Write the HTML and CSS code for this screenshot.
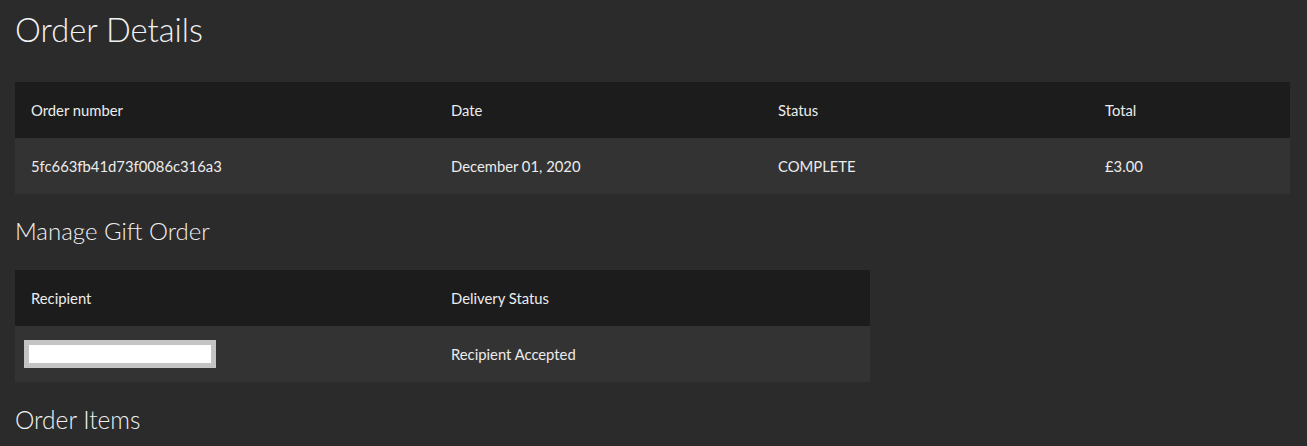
FILE: index.html
```html
<!DOCTYPE html>
<html lang="en">
<head>
<meta charset="utf-8">
<title>Order Details</title>
<link rel="stylesheet" href="styles.css">
</head>
<body>
<main class="page">
  <h1 class="title">Order Details</h1>
  <table class="tbl tbl-order">
    <thead>
      <tr>
        <th class="c1">Order number</th>
        <th class="c2">Date</th>
        <th class="c3">Status</th>
        <th class="c4">Total</th>
      </tr>
    </thead>
    <tbody>
      <tr>
        <td>5fc663fb41d73f0086c316a3</td>
        <td>December 01, 2020</td>
        <td>COMPLETE</td>
        <td class="total">£3.00</td>
      </tr>
    </tbody>
  </table>

  <h2 class="subtitle">Manage Gift Order</h2>
  <table class="tbl tbl-gift">
    <thead>
      <tr>
        <th class="g1">Recipient</th>
        <th class="g2">Delivery Status</th>
      </tr>
    </thead>
    <tbody>
      <tr>
        <td class="cell-input"><span class="redacted"></span></td>
        <td>Recipient Accepted</td>
      </tr>
    </tbody>
  </table>

  <h2 class="subtitle subtitle-items">Order Items</h2>
</main>
</body>
</html>
```

FILE: styles.css
```css
html, body {
  margin: 0;
  padding: 0;
  background: #2b2b2b;
}

body {
  font-family: Lato, "Open Sans", sans-serif;
  color: #ececec;
  font-size: 14.8px;
}

.page {
  padding: 0 17px 0 15px;
}

.title {
  margin: 0;
  padding-top: 8px;
  font-weight: 300;
  font-size: 32.7px;
  line-height: 44px;
  color: #f2f2f2;
  margin-bottom: 30px;
}

.subtitle {
  margin: 25px 0 27px;
  font-weight: 300;
  font-size: 24px;
  line-height: 24px;
  color: #f0f0f0;
}

.subtitle-items {
  font-size: 24.5px;
  margin-top: 26px;
}

.tbl {
  border-collapse: collapse;
  table-layout: fixed;
}

.tbl-order {
  width: 1275px;
}

.tbl-gift {
  width: 855px;
}

.tbl th,
.tbl td {
  height: 56px;
  padding: 0 16px;
  text-align: left;
  vertical-align: middle;
  font-weight: 400;
  font-size: 14.8px;
  line-height: 16px;
  box-sizing: border-box;
}

.tbl thead tr {
  background: #1c1c1c;
}

.tbl tbody tr {
  background: #333333;
}

.c1 { width: 420px; }
.c2 { width: 327px; }
.c3 { width: 327px; }
.c4 { width: 201px; }

.g1 { width: 420px; }
.g2 { width: 435px; }

.total {
  font-weight: 700;
}

.cell-input {
  padding-left: 9px !important;
}

.redacted {
  display: block;
  width: 182px;
  height: 18px;
  background: #ffffff;
  border: 5px solid #c4c4c4;
}
```
